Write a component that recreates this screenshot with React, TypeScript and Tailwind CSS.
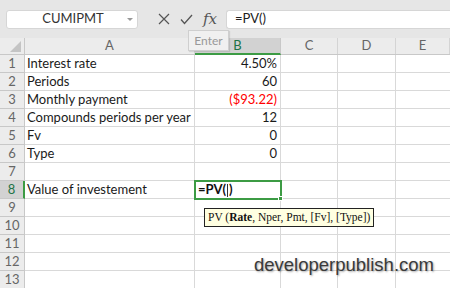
import React from "react";

const cols = [
  { key: "A", w: 170 },
  { key: "B", w: 86 },
  { key: "C", w: 57 },
  { key: "D", w: 58 },
  { key: "E", w: 54 },
];

const data: Record<number, { a?: string; b?: React.ReactNode; red?: boolean }> = {
  1: { a: "Interest rate", b: "4.50%" },
  2: { a: "Periods", b: "60" },
  3: { a: "Monthly payment", b: "($93.22)", red: true },
  4: { a: "Compounds periods per year", b: "12" },
  5: { a: "Fv", b: "0" },
  6: { a: "Type", b: "0" },
  7: {},
  8: { a: "Value of investement" },
  9: {},
  10: {},
  11: {},
  12: {},
  13: {},
};

export default function App() {
  const font = { fontFamily: "Lato, 'Open Sans', sans-serif" };
  return (
    <div className="relative w-[450px] h-[288px] overflow-hidden bg-white" style={font}>
      {/* Formula bar */}
      <div className="flex items-center h-[38px] bg-[#e6e6e6]">
        <div className="ml-[6px] w-[132px] h-[19px] bg-white rounded-[3px] border border-[#d6d6d6] flex items-center relative">
          <span className="flex-1 text-center text-[13px] text-[#333] pl-[2px]">CUMIPMT</span>
          <span className="absolute right-[4px] top-[7px] w-0 h-0 border-l-[3px] border-r-[3px] border-t-[3px] border-l-transparent border-r-transparent border-t-[#999]" />
        </div>
        <div className="w-[20px]" />
        <svg width="12" height="12" viewBox="0 0 12 12">
          <path d="M1 1 L11 11 M11 1 L1 11" stroke="#555" strokeWidth="1.2" fill="none" />
        </svg>
        <svg width="13" height="11" viewBox="0 0 13 11" className="ml-[10px]">
          <path d="M1 5.5 L4.5 9.5 L12 1" stroke="#555" strokeWidth="1.3" fill="none" />
        </svg>
        <span className="ml-[10px] text-[15px] italic text-[#555]" style={{ fontFamily: "'DejaVu Serif', serif" }}>fx</span>
        <div className="ml-auto w-[224px] h-[19px] bg-white border-l border-y border-[#d6d6d6] rounded-l-[3px] flex items-center pl-[8px] text-[13px] text-[#222]">
          =PV()
        </div>
      </div>

      {/* Column headers */}
      <div className="flex h-[17px] bg-[#ececec] border-b border-[#c8c8c8]">
        <div className="w-[25px] shrink-0 border-r border-[#c8c8c8] relative">
          <svg width="11" height="11" viewBox="0 0 11 11" className="absolute right-[3px] bottom-[2px]">
            <path d="M11 0 L11 11 L0 11 Z" fill="#c4c4c4" />
          </svg>
        </div>
        {cols.map((c) =>
          c.key === "B" ? (
            <div
              key={c.key}
              className="shrink-0 flex items-center justify-center text-[13px] bg-[#d2d2d2] text-[#217346] border-r border-[#c8c8c8] border-b-2 border-b-[#3c9b44] -mb-px"
              style={{ width: c.w }}
            >
              {c.key}
            </div>
          ) : (
            <div
              key={c.key}
              className="shrink-0 flex items-center justify-center text-[13px] text-[#666] border-r border-[#d4d4d4]"
              style={{ width: c.w }}
            >
              {c.key}
            </div>
          )
        )}
      </div>

      {/* Rows */}
      {Object.keys(data).map((k) => {
        const r = Number(k);
        const d = data[r];
        const sel = r === 8;
        return (
          <div key={r} className="flex h-[18px]">
            <div
              className={
                sel
                  ? "w-[25px] shrink-0 bg-[#d2d2d2] border-r-2 border-r-[#3c9b44] border-b border-[#c8c8c8] flex items-center justify-center text-[13px] text-[#217346]"
                  : "w-[25px] shrink-0 bg-[#ececec] border-r border-b border-[#c8c8c8] flex items-center justify-center text-[13px] text-[#666]"
              }
            >
              {r}
            </div>
            <div className="w-[170px] shrink-0 border-r border-b border-[#d9d9d9] flex items-center pl-[2px] text-[13px] text-[#1a1a1a] whitespace-nowrap">
              {d.a}
            </div>
            <div
              className={
                "w-[86px] shrink-0 border-r border-b border-[#d9d9d9] flex items-center justify-end pr-[3px] text-[13px] whitespace-nowrap " +
                (d.red ? "text-[#ff0000]" : "text-[#1a1a1a]")
              }
            >
              {d.b}
            </div>
            <div className="w-[57px] shrink-0 border-r border-b border-[#d9d9d9]" />
            <div className="w-[58px] shrink-0 border-r border-b border-[#d9d9d9]" />
            <div className="w-[54px] shrink-0 border-b border-[#d9d9d9]" />
          </div>
        );
      })}

      {/* Active cell B8 */}
      <div className="absolute left-[194px] top-[180px] w-[88px] h-[20px] border-2 border-[#3c9b44] bg-white flex items-center pl-[2px] text-[13px] font-bold text-[#111]">
        =PV(<span className="inline-block w-px h-[13px] bg-[#333] mx-px" />)
        <span className="absolute -right-[3px] -bottom-[3px] w-[5px] h-[5px] bg-[#3c9b44] border border-white" />
      </div>

      {/* Enter tooltip */}
      <div className="absolute left-[188px] top-[30px] w-[41px] h-[21px] bg-[#f0f0f0] border border-[#cfcfcf] shadow-[1px_1px_1px_rgba(0,0,0,0.1)] flex items-center justify-center text-[12px] text-[#999]">
        Enter
      </div>

      {/* PV tooltip */}
      <div
        className="absolute left-[204px] top-[208px] h-[19px] px-[3px] bg-[#ffffe1] border border-[#222] flex items-center text-[11.5px] text-[#111] whitespace-nowrap"
        style={{ fontFamily: "'Liberation Serif', serif" }}
      >
        PV (<b>Rate</b>, Nper, Pmt, [Fv], [Type])
      </div>

      {/* Watermark */}
      <div
        className="absolute left-[254px] top-[251px] text-[18.5px] text-[#3a3a3a] whitespace-nowrap"
        style={{ fontFamily: "'Liberation Sans', Arial, sans-serif", textShadow: "1px 1px 2px rgba(0,0,0,0.35)" }}
      >
        developerpublish.com
      </div>
    </div>
  );
}
